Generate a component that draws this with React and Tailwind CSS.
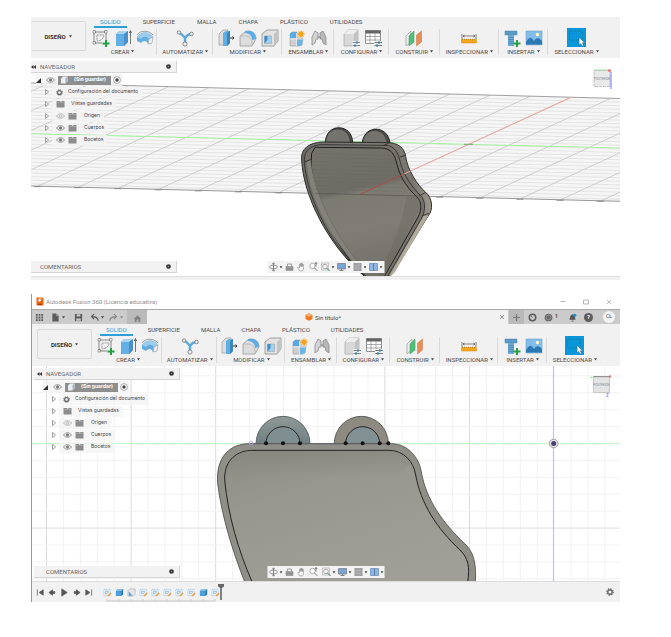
import React from "react";

const range = (n) => Array.from({ length: n }, (_, i) => i);

/* ---------- toolbar icons ---------- */

const Svg = ({ children, size = "size-[18px]", box = "0 0 18 18" }) => (
  <svg viewBox={box} className={`${size} shrink-0`} fill="none" aria-hidden="true">
    {children}
  </svg>
);

const Box = ({ front, top, side, children }) => (
  <Svg>
    <path d="M2 5 6 1h10v11l-4 5H2Z" fill={front} stroke="#9a9a9a" strokeWidth=".6" />
    <path d="M2 5 6 1h10l-4 4Z" fill={top} />
    <path d="M12 5 16 1v11l-4 5Z" fill={side} />
    {children}
  </Svg>
);

const Plus = () => <path d="M10.500 14.500h7M14 11v7" stroke="#25a045" strokeWidth="2" />;

const icons = {
  sketch: (
    <Svg>
      <path d="M2 3h12v8M2 3v11h8" stroke="#7c7c7c" strokeWidth=".9" />
      <path d="M5 6h7c0 3-3 6-7 6Z" stroke="#888" strokeWidth=".8" strokeDasharray="2 .6" />
      <path d="M1 1.500h2.500V4H1ZM12.500 1.500H15V4h-2.500ZM1 12.500h2.500V15H1Z" fill="#fff" stroke="#666" strokeWidth=".6" />
      <Plus />
    </Svg>
  ),
  extrude: (
    <Svg>
      <path d="M2 5 5 2h9v11l-4 4H2Z" fill="#62b0e6" />
      <path d="M2 5 5 2h9l-4 3Z" fill="#a9d3f0" />
      <path d="m10 5 4-3v11l-4 4Z" fill="#4a90c6" />
      <path d="M16.500 15V2M15.300 4l1.200-2.500L17.500 4" stroke="#555" strokeWidth=".8" />
    </Svg>
  ),
  revolve: (
    <Svg>
      <path d="M1 8C4 2 14 2 17 8l-1 6-4 1c-1-3-4-4-6-2l-1 1-4-2Z" fill="#62aee2" />
      <path d="M1 8C4 2 14 2 17 8l-4 2c-2-3-6-3-8 0Z" fill="#9ccbeb" />
      <path d="M1 6C4 1 13 1 17 6" stroke="#888" strokeWidth=".8" />
      <path d="m12 15 4-1 1-6-4 2Z" fill="#eee" stroke="#999" strokeWidth=".5" />
    </Svg>
  ),
  automate: (
    <Svg>
      <path d="M3 4c3 0 4 3 6 5 2-3 3-4 6-4M9 8v7" stroke="#5aa9dc" strokeWidth="2.400" />
      <circle cx="3" cy="3.500" r="1.700" fill="#eee" stroke="#777" strokeWidth=".8" />
      <circle cx="15.500" cy="5" r="1.800" fill="#eee" stroke="#777" strokeWidth=".8" />
      <circle cx="9" cy="15" r="2.100" fill="#eee" stroke="#777" strokeWidth=".8" />
    </Svg>
  ),
  press: (
    <Svg>
      <path d="M2 5 6 1h5v15H2Z" fill="#ddd" stroke="#999" strokeWidth=".7" />
      <path d="m6 4 3-2h4v12l-3 3H6Z" fill="#5eafe4" />
      <path d="m10 4 3-2v12l-3 3Z" fill="#3d84b9" />
      <path d="M13 9h4M15.500 7.500l1.500 1.500-1.500 1.500" stroke="#333" strokeWidth="1" />
    </Svg>
  ),
  fillet: (
    <Svg>
      <path d="M1 16V7l6-5h4c4 1 6 4 6 8l-4 7H1Z" fill="#ddd" stroke="#999" strokeWidth=".8" />
      <path d="m7 2 4 0c4 1 6 4 6 8l-4 1c0-4-2-6-6-7l-2 0Z" fill="#5bade6" />
      <path d="M1 7h5c4 0 7 3 7 6v4" stroke="#b5b5b5" strokeWidth=".8" />
    </Svg>
  ),
  shell: (
    <Svg>
      <path d="M1 5 6 1h11v11l-4 5H1Z" fill="#e2e2e2" stroke="#8d8d8d" strokeWidth=".8" />
      <path d="M13 5 17 1v11l-4 5Z" fill="#c4c4c4" />
      <path d="M3.500 7h7v7.500h-7Z" fill="#9fd0f0" stroke="#999" strokeWidth=".5" />
      <path d="M3.500 7h3v4l-3 3.500Z" fill="#3c8dc9" />
    </Svg>
  ),
  component: (
    <Svg>
      <path d="M2 5 4 3h5v6h6l-1 7-2 1H2Z" fill="#cfcfcf" stroke="#999" strokeWidth=".6" />
      <path d="M2 5 4 3h5v6H2Z" fill="#58aae2" />
      <path d="M8.500 10H15l-1 6-2 1H8.500Z" fill="#6cb5e7" />
      <path d="M8.500 4v13M2 10h13" stroke="#eee" strokeWidth=".8" />
      <path d="m13 1 1 2 2-1-1 2 2.500 1L15 6l1 2-2-.8-1 2.300-1-2.300L10 8l.8-2L8.500 5l2.300-1L10 2l2 1Z" fill="#f9a51a" />
    </Svg>
  ),
  joint: (
    <Svg>
      <path d="M2 16V8l3-6 3 2v6l-2 0-1 4Z" fill="#d4d4d4" stroke="#8a8a8a" strokeWidth=".8" />
      <path d="M16 16V8l-3-6-3 2v6l2 0 1 4Z" fill="#b8b8b8" stroke="#8a8a8a" strokeWidth=".8" />
      <path d="M7.500 8h3" stroke="#999" strokeWidth="1.500" />
    </Svg>
  ),
  configure: (
    <Box front="#d8d8d8" top="#eee" side="#c2c2c2">
      <path d="M10 12h8v6h-8Z" fill="#f1f1f1" />
      <path d="M10.500 13.500H18M10.500 16.500H18" stroke="#666" strokeWidth=".8" />
      <path d="M15 12v3M13 15v3" stroke="#3486c4" strokeWidth="1.200" />
    </Box>
  ),
  tableIcon: (
    <Svg>
      <path d="M1.500 1.500h15v13h-15Z" fill="#fff" stroke="#777" strokeWidth=".8" />
      <path d="M1.500 1.500h15v3h-15Z" fill="#666" />
      <path d="M1.500 7.500h15M1.500 11h15M6 4v10M11 4v10" stroke="#888" strokeWidth=".7" />
      <path d="M10 12h8v6h-8Z" fill="#f1f1f1" />
      <path d="M10.500 13.500H18M10.500 16.500H18" stroke="#555" strokeWidth=".8" />
      <path d="M15 12v3M13 15v3" stroke="#3486c4" strokeWidth="1.200" />
    </Svg>
  ),
  plane: (
    <Svg>
      <path d="m1 7 5-5v11l-5 4Z" fill="#eee" stroke="#999" strokeWidth=".7" />
      <path d="m4 7 5-5v11l-5 4Z" fill="#4fc07a" stroke="#4b9f6a" strokeWidth=".6" />
      <path d="m11.500 6 5-4v11l-5 4Z" fill="#e58e5b" stroke="#c77747" strokeWidth=".5" />
    </Svg>
  ),
  measure: (
    <Svg>
      <path d="M2 5v5M16 5v5M3 7h12M4.500 6 3 7l1.500 1M13.500 6 15 7l-1.500 1" stroke="#666" strokeWidth=".8" />
      <path d="M1.500 10.500h15V14h-15Z" fill="#f5a51d" stroke="#d48c11" strokeWidth=".5" />
      <path d="M2 10.300h14" stroke="#a96f0a" strokeWidth=".8" strokeDasharray="1 1" />
    </Svg>
  ),
  bolt: (
    <Svg>
      <path d="M2 2h12v4H2Z" fill="#5b9bc8" stroke="#4882aa" strokeWidth=".5" />
      <path d="M5 6h6v11H5Z" fill="#6ba8d2" />
      <path d="M5 8.500h6M5 10.500h6M5 12.500h6M5 14.500h6" stroke="#4f88b0" strokeWidth=".8" />
      <Plus />
    </Svg>
  ),
  image: (
    <Svg>
      <path d="M1 2h16v14H1Z" fill="#82bdea" stroke="#6aa6d2" strokeWidth=".6" />
      <path d="M1 13c4-6 5-5 8-1 3-4 5-3 8 0v3.500H1Z" fill="#2c78b3" />
      <circle cx="12.500" cy="5.500" r="1.700" fill="#fff7c9" />
    </Svg>
  ),
  select: (
    <Svg size="size-[19px]">
      <path d="M0 0h18v18H0Z" fill="#0a96da" />
      <path d="M2.500 3h12v8.500h-12Z" stroke="#1a7b8e" strokeWidth=".8" strokeDasharray="1.500 1" />
      <path d="m11.500 9 0 7 1.600-1.400 1.200 2.400 1.300-.6-1.100-2.400h2Z" fill="#fff" stroke="#555" strokeWidth=".4" />
    </Svg>
  ),
};

const groups = [
  { label: "CREAR", items: ["sketch", "extrude", "revolve"], grow: "flex-[69_1_0%]" },
  { label: "AUTOMATIZAR", items: ["automate"], grow: "flex-[56_1_0%]" },
  { label: "MODIFICAR", items: ["press", "fillet", "shell"], grow: "flex-[69_1_0%]" },
  { label: "ENSAMBLAR", items: ["component", "joint"], grow: "flex-[52_1_0%]" },
  { label: "CONFIGURAR", items: ["configure", "tableIcon"], grow: "flex-[54_1_0%]" },
  { label: "CONSTRUIR", items: ["plane"], grow: "flex-[51_1_0%]" },
  { label: "INSPECCIONAR", items: ["measure"], grow: "flex-[59_1_0%]" },
  { label: "INSERTAR", items: ["bolt", "image"], grow: "flex-[49_1_0%]" },
  { label: "SELECCIONAR", items: ["select"], grow: "flex-[57_1_0%]" },
];

const tabs = ["SOLIDO", "SUPERFICIE", "MALLA", "CHAPA", "PLÁSTICO", "UTILIDADES"];

const Caret = () => (
  <svg viewBox="0 0 3 3" className="size-[3px] shrink-0" aria-hidden="true">
    <path d="M0 .3h3L1.500 2.500Z" fill="#444" />
  </svg>
);

function Toolbar({ inset }) {
  return (
    <div className={`flex bg-[#f1f1f1] ${inset ? "h-[42px] pr-[17px] pl-[5px] pt-px" : "h-[41px] pr-[15px]"}`}>
      <button
        className={`mt-1 flex h-[30px] w-[55px] shrink-0 items-center justify-center gap-[3px] rounded-[2px] border border-[#d9d9d9] text-[6px] font-bold text-[#333] ${inset ? "" : "border-l-0"}`}
      >
        DISEÑO <Caret />
      </button>
      <div className="ml-[2px] flex min-w-0 flex-1 flex-col">
        <nav className={`flex h-[11px] pl-[6px] ${inset ? "gap-[9px]" : "gap-[10px]"}`}>
          {tabs.map((t, i) => (
            <button
              key={t}
              className={`h-[11px] border-b-2 px-[6px] text-[6px] leading-[9px] ${i === 0 ? "border-[#2ea0d8] text-[#2ea0d8]" : "border-transparent text-[#4a4a4a]"}`}
            >
              {t}
            </button>
          ))}
        </nav>
        <div className="flex">
          {groups.map((g, i) => (
            <div
              key={g.label}
              className={`flex min-w-0 flex-col items-center ${g.grow} ${i < groups.length - 1 ? "bg-[linear-gradient(#dadada,#dadada)] bg-[length:1px_26px] bg-[position:right_1px] bg-no-repeat" : ""}`}
            >
              <div className="flex h-[19px] items-center gap-1">
                {g.items.map((n) => (
                  <button key={n} aria-label={n} className="shrink-0">
                    {icons[n]}
                  </button>
                ))}
              </div>
              <button className="flex items-center gap-[2px] text-[6px] leading-[9px] whitespace-nowrap text-[#4a4a4a]">
                {g.label} <Caret />
              </button>
            </div>
          ))}
        </div>
      </div>
    </div>
  );
}

/* ---------- browser tree ---------- */

const Eye = ({ off }) => (
  <svg viewBox="0 0 9 6" className="h-[6px] w-[9px] shrink-0" fill="none" stroke={off ? "#aaa" : "#808080"} aria-hidden="true">
    <path d="M.5 3C2.500 0 6.500 0 8.500 3 6.500 6 2.500 6 .5 3Z" strokeWidth=".8" />
    <circle cx="4.500" cy="3" r="1.300" fill={off ? "none" : "#777"} strokeWidth=".8" />
  </svg>
);

const Folder = () => (
  <svg viewBox="0 0 9 8" className="h-2 w-[9px] shrink-0" aria-hidden="true">
    <path d="M.5 1h3.500l.8 1 1-1h2.700v6.500h-8Z" fill="#8c8c8c" />
    <path d="M.5 2.500h8" stroke="#bbb" strokeWidth=".5" />
  </svg>
);

const Gear = ({ size = "size-[7px]" }) => (
  <svg viewBox="0 0 8 8" className={`${size} shrink-0`} fill="none" stroke="#666" aria-hidden="true">
    <circle cx="4" cy="4" r="2.200" strokeWidth="1.400" />
    <circle cx="4" cy="4" r="3.300" strokeWidth="1.100" strokeDasharray="1.300 1.290" />
  </svg>
);

const Expand = () => (
  <svg viewBox="0 0 4 6" className="h-[6px] w-1 shrink-0" fill="#fff" stroke="#888" strokeWidth=".8" aria-hidden="true">
    <path d="M.5.5 3.500 3 .5 5.500Z" />
  </svg>
);

const Dot = () => (
  <svg viewBox="0 0 6 6" className="size-[5px] shrink-0" aria-hidden="true">
    <circle cx="3" cy="3" r="2.800" fill="#333" />
    <circle cx="3" cy="3" r=".8" fill="#999" />
  </svg>
);

const rows = [
  { text: "Configuración del documento", kind: "gear" },
  { text: "Vistas guardadas", kind: "folder" },
  { text: "Origen", kind: "hidden" },
  { text: "Cuerpos", kind: "visible" },
  { text: "Bocetos", kind: "visible" },
];

function PanelBar({ text, inset, arrows }) {
  return (
    <div
      className={`flex h-3 w-[146px] items-center border-r border-b border-[#d4d4d4] bg-[#f2f2f2] pr-[5px] text-[6px] leading-3 text-[#666] ${inset ? "pl-[3px]" : ""}`}
    >
      <span className="flex w-[9px] shrink-0 items-center">
        {arrows && (
          <svg viewBox="0 0 5 4" className="h-1 w-[5px]" fill="#333" aria-hidden="true">
            <path d="M2.500 0v4L0 2ZM5 0v4L2.500 2Z" />
          </svg>
        )}
      </span>
      <span className="flex-1">{text}</span>
      <Dot />
    </div>
  );
}

function Browser({ inset }) {
  return (
    <div className={`absolute ${inset ? "top-[2px] left-[2px]" : "top-[3px] left-0"}`}>
      <PanelBar text="NAVEGADOR" inset={inset} arrows />
      <ul className={`mt-px font-[Inter,sans-serif] text-[5px] text-[#444] ${inset ? "pl-[9px]" : "pl-[5px]"}`}>
        <li className="flex h-3 w-fit items-center bg-[#f2f2f2]/80 pr-px">
          <svg viewBox="0 0 5 5" className="size-[5px]" aria-hidden="true">
            <path d="M5 0v5H0Z" fill="#333" />
          </svg>
          <span className="ml-[5px] flex">
            <Eye />
          </span>
          <span className="ml-[3px] flex h-[9px] items-center gap-[6px] bg-[#8e8e8e] pr-[5px] pl-[2px] font-bold text-white">
            <svg viewBox="0 0 8 8" className="size-2" aria-hidden="true">
              <path d="m1 2.500 2-2h4.500v5l-2 2H1Z" fill="#e9eef3" />
              <path d="M5.500 2.500 7.500.5v5l-2 2Z" fill="#a7b4c2" />
            </svg>
            (Sin guardar)
          </span>
          <svg viewBox="0 0 8 8" className="ml-[2px] size-2" fill="none" aria-hidden="true">
            <circle cx="4" cy="4" r="3.400" fill="#fff" stroke="#888" strokeWidth=".7" />
            <circle cx="4" cy="4" r="1.700" fill="#444" />
          </svg>
        </li>
        {rows.map((r) => (
          <li key={r.text} className="flex h-3 items-center pl-[9px]">
            <Expand />
            <span className="ml-[3px] flex h-[11px] items-center bg-[#f4f4f4]/80 px-1 whitespace-nowrap">
              {r.kind === "gear" && (
                <>
                  <Gear />
                  <span className="pl-[5px]">{r.text}</span>
                </>
              )}
              {r.kind === "folder" && (
                <>
                  <Folder />
                  <span className="pl-[6px]">{r.text}</span>
                </>
              )}
              {(r.kind === "hidden" || r.kind === "visible") && (
                <>
                  <Eye off={r.kind === "hidden"} />
                  <span className="w-[3px]" />
                  <Folder />
                  <span className="pl-[7px]">{r.text}</span>
                </>
              )}
            </span>
          </li>
        ))}
      </ul>
    </div>
  );
}

/* ---------- navigation bar ---------- */

const NavIcon = ({ children }) => (
  <Svg size="size-[10px]" box="0 0 10 10">
    {children}
  </Svg>
);

const navItems = [
  { name: "Órbita", caret: true, d: <><ellipse cx="5" cy="5" rx="4" ry="1.800" stroke="#888" strokeWidth=".8" /><path d="M5 1v8M3.700 2.300 5 .8l1.300 1.500M3.700 7.700 5 9.200l1.300-1.500" stroke="#777" strokeWidth=".9" /></> },
  { name: "Mirar a", d: <><path d="M1.500 4.500h7v4h-7Z" fill="#999" stroke="#888" strokeWidth=".6" /><path d="M3 4V2h4v2M1.500 6.500h7" stroke="#888" strokeWidth=".8" /></> },
  { name: "Encuadre", d: <path d="M3.200 8.800 1.200 5.500l.8-.5 1 1V2.200h1v2.300V1.300h1v3.200V1.500h1v3V2.500h1V7l-.9 1.800Z" fill="#fff" stroke="#888" strokeWidth=".6" /> },
  { name: "Zoom", d: <><circle cx="4" cy="4" r="2.700" fill="#fff" stroke="#999" strokeWidth=".8" /><path d="m6 6 3 3M7.500 4.500v-4M6.300 2 7.500.5 8.700 2" stroke="#666" strokeWidth=".8" /></> },
  { name: "Ventana", caret: true, d: <><path d="M1 1h7v7H1Z" stroke="#aaa" strokeWidth=".6" /><circle cx="4.500" cy="4.500" r="2.300" fill="#fff" stroke="#888" strokeWidth=".7" /><path d="m6 6 3 3" stroke="#3f7f5a" strokeWidth="1" /></> },
  { name: "Visualización", caret: true, d: <><path d="M1 1.500h8v5.500H1Z" fill="#79a5d3" stroke="#778" strokeWidth=".7" /><path d="M3 8.500h4M5 7v1.500" stroke="#777" strokeWidth=".9" /></> },
  { name: "Rejilla", caret: true, d: <><path d="M1 1h8v8H1Z" fill="#9b9b9f" /><path d="M1 3.700h8M1 6.300h8M3.700 1v8M6.300 1v8" stroke="#c4c4c8" strokeWidth=".5" /></> },
  { name: "Vistas", caret: true, d: <><path d="M1 1.500h8v7H1Z" fill="#8fb4e0" stroke="#6589b8" strokeWidth=".7" /><path d="M5 1.500v7" stroke="#4a6c99" strokeWidth=".8" /></> },
];

function NavBar() {
  return (
    <div className="absolute bottom-[3px] left-1/2 flex h-3 w-[117px] -translate-x-1/2 items-center justify-between bg-[#f3f3f3] px-px">
      {navItems.map((n) => (
        <button key={n.name} aria-label={n.name} className="flex items-center gap-px">
          <NavIcon>{n.d}</NavIcon>
          {n.caret && <Caret />}
        </button>
      ))}
    </div>
  );
}

function Viewport({ inset, children }) {
  return (
    <div className={`relative overflow-hidden bg-white ${inset ? "aspect-[588/215]" : "aspect-[589/218]"}`}>
      {children}
      <Browser inset={inset} />
      <div className={`absolute bottom-[3px] ${inset ? "left-[2px]" : "left-0"}`}>
        <PanelBar text="COMENTARIOS" inset={inset} />
      </div>
      <NavBar />
    </div>
  );
}

/* ---------- 3D scenes ---------- */

function PerspectiveScene() {
  return (
    <svg viewBox="31 58 589 218" className="block size-full" fill="none">
      <defs>
        <clipPath id="floor">
          <path d="M31 83 620 98.500V201.300L31 186Z" />
        </clipPath>
        <linearGradient id="cavity" x1="0" y1="0" x2=".2" y2="1">
          <stop offset="0" stopColor="#74736b" />
          <stop offset=".38" stopColor="#6d6c65" />
          <stop offset=".42" stopColor="#7c7b72" />
          <stop offset=".7" stopColor="#7f7d75" />
          <stop offset="1" stopColor="#74736b" />
        </linearGradient>
        <linearGradient id="wall" x1="0" y1="0" x2="1" y2="0">
          <stop offset="0" stopColor="#6c6b65" />
          <stop offset=".5" stopColor="#7f7d75" />
          <stop offset=".85" stopColor="#77756d" />
          <stop offset="1" stopColor="#9a968a" />
        </linearGradient>
      </defs>
      <g clipPath="url(#floor)">
        <path d="M31 83 620 98.500V201.300L31 186Z" fill="#f6f6f6" />
        {range(30).map((i) => (
          <path key={i} d={`M31 ${83 + i * 3.6}L620 ${98.5 + i * 3.6}`} stroke="#dedede" strokeWidth=".8" />
        ))}
        {range(22).map((i) => (
          <path key={i} d={`M${-203 + i * 40.2} ${179.8 + i * 1.05}L${8 + i * 40.2} ${82.4 + i * 1.05}`} stroke="#c4c4c4" strokeWidth=".8" />
        ))}
      </g>
      <path d="M31 83 620 98.500" stroke="#999" strokeWidth=".9" />
      <path d="M31 186 620 201.300" stroke="#8a8a8a" strokeWidth=".9" />
      {range(15).map((i) => (
        <path key={i} d={`M${34 + i * 40.2} ${186.6 + i * 1.05}h7`} stroke="#888" strokeWidth="1" />
      ))}
      <path d="M31 133.700 620 148" stroke="#a4f3a0" strokeWidth="1" />

      <g transform="translate(290 85) scale(.33333)" strokeLinejoin="round">
        <path d="M106 174C106 113 188 113 188 174Z" fill="#4f4f4a" stroke="#222" strokeWidth="3" />
        <path d="M107 174C107 118 180 118 181 174Z" fill="#74736d" stroke="#333" strokeWidth="2" />
        <path d="M217 178C217 117 300 117 300 180Z" fill="#4f4f4a" stroke="#222" strokeWidth="3" />
        <path d="M218 178C218 122 291 122 292 180Z" fill="#74736d" stroke="#333" strokeWidth="2" />
        <path
          d="M95 171 290 173C325 172 344 190 347 215 353 255 382 300 407 322 428 340 430 375 415 392L310 562 300 573H222C110 475 40 330 35 225 31 190 60 173 95 171Z"
          fill="url(#wall)" stroke="#2b2b29" strokeWidth="3"
        />
        <path d="m415 392-15 0L298 573h5l12-12Z" fill="#b0ab9c" />
        <path
          d="M95 179 285 181C315 181 325 205 331 232 342 275 368 308 391 331 408 347 406 378 396 398L292 575H225C115 475 48 330 43 225 42 195 65 181 95 179Z"
          fill="#75736b" stroke="#2b2b29" strokeWidth="2.500"
        />
        <path
          d="M75 187 275 189C305 190 314 210 321 238 332 285 360 316 380 335 395 350 396 370 386 393L283 575H230C150 520 50 320 65 205Z"
          fill="url(#cavity)" stroke="#1f1f1e" strokeWidth="3"
        />
        <path d="M49 230C55 330 112 450 208 550L218 550C130 445 70 320 62 222Z" fill="#83827b" stroke="#555" strokeWidth="1" />
        <path d="M350 335 388 338 392 370 283 573H262C310 490 335 410 350 335Z" fill="#63625b" opacity=".3" />
        <path d="m330 216 17-5M388 332l20-10M398 392l18-7M45 230l20-7M280 182l15-7" stroke="#2b2b29" strokeWidth="2.500" />
        <path d="M75 325 378 333" stroke="#55544e" strokeWidth="2" />
        {range(10).map((i) => (
          <path key={i} d={`M70 ${205 + i * 12} ${312 + i * 4} ${212 + i * 12}`} stroke="#5e5d57" strokeWidth="1" opacity=".5" />
        ))}
      </g>
      <path d="M404 174 571 97.500" stroke="#f6a09a" strokeWidth=".9" />
      <path d="M360 194.300 404 174" stroke="#b8453c" strokeWidth=".9" />
      <path d="M464 144.300h9" stroke="#769e6e" strokeWidth=".9" />

      <path d="M594 70.500h16v16h-16Z" fill="#e9e9e9" stroke="#aaa" strokeWidth=".7" strokeDasharray="3 1" />
      <text x="602" y="79.500" textAnchor="middle" fontSize="3" fill="#888">POSTERIOR</text>
      <path d="M594 70h14" stroke="#88dd88" strokeWidth=".8" />
      <path d="M608 70.500h3" stroke="#e66" strokeWidth="2" />
      <path d="M611 72v17" stroke="#8b87f0" strokeWidth="1.200" />
    </svg>
  );
}

function FrontScene() {
  return (
    <svg viewBox="32 366 588 215" className="block size-full" fill="none">
      <defs>
        <linearGradient id="plate" x1="0" y1="0" x2=".6" y2="1">
          <stop offset="0" stopColor="#8c8b84" />
          <stop offset=".35" stopColor="#98978f" />
          <stop offset="1" stopColor="#9f9e97" />
        </linearGradient>
        <linearGradient id="blueEar" x1="0" y1="0" x2="0" y2="1">
          <stop offset="0" stopColor="#8f9997" />
          <stop offset="1" stopColor="#708083" />
        </linearGradient>
        <linearGradient id="topShade" x1="0" y1="0" x2="0" y2="1">
          <stop offset="0" stopColor="#85847c" />
          <stop offset="1" stopColor="#85847c" stopOpacity="0" />
        </linearGradient>
      </defs>
      {range(35)
        .filter((i) => i !== 30)
        .map((i) => (
          <path key={i} d={`M${46.5 + i * 16.92} 366V581`} stroke={i % 5 === 0 ? "#dadada" : "#f2f2f2"} strokeWidth="1" />
        ))}
      {range(13).map((i) => (
        <path key={i} d={`M32 ${375.8 + i * 16.92}H620`} stroke={i === 9 ? "#dedede" : "#f2f2f2"} strokeWidth="1" />
      ))}
      <path d="M32 443.500H620" stroke="#c8f5c6" strokeWidth="1.200" />
      <path d="M553.500 366V581" stroke="#c0bff8" strokeWidth="1.200" />
      <g transform="translate(210 400) scale(.33333)">
        <path d="M138 131a81 82 0 0 1 162 0Z" fill="url(#blueEar)" stroke="#4b5253" strokeWidth="2.500" />
        <path d="M168 131a51 51 0 0 1 102 0Z" fill="#7f8e90" stroke="#262626" strokeWidth="3" />
        <path d="M373 131a81 82 0 0 1 162 0Z" fill="#8c8a81" stroke="#4b4b48" strokeWidth="2.500" />
        <path d="M407 131a51 51 0 0 1 102 0Z" fill="#819092" stroke="#262626" strokeWidth="3" />
        <path
          d="M112 131H545C592 132 626 170 634 215 648 300 700 370 765 432 790 455 800 490 796 545H104C70 460 35 350 23 250 18 180 50 135 112 131Z"
          fill="#8f8f88" stroke="#4b4b48" strokeWidth="2.500"
        />
        <path
          d="M122 151H540C582 153 611 185 617 225 632 310 680 385 750 450 775 475 780 500 773 545H126C85 450 55 350 44 240 42 190 70 155 122 151Z"
          fill="url(#plate)" stroke="#222" strokeWidth="3"
        />
        <path d="M122 153H540C570 155 590 170 602 190L560 235H48C44 190 75 155 122 153Z" fill="url(#topShade)" opacity=".6" />
        <path d="M120 131H535" stroke="#66666f" strokeWidth="2.500" />
        {[168, 219, 270, 407, 458, 509, 535].map((x) => (
          <circle key={x} cx={x} cy="130" r="6" fill="#111" />
        ))}
        <circle cx="123" cy="129" r="5.500" stroke="#b99be6" strokeWidth="2.500" />
      </g>
      <circle cx="553.700" cy="443.500" r="4.300" fill="#e4e4ea" stroke="#999" strokeWidth=".9" />
      <circle cx="553.700" cy="443.500" r="2.500" fill="#4c3f75" />

      <path d="M593.500 376.500h16v16h-16Z" fill="#e4e4e4" stroke="#bbb" strokeWidth=".8" />
      <path d="M593.500 376.700h16" stroke="#888" strokeWidth="1" />
      <text x="601.500" y="386" textAnchor="middle" fontSize="3" fill="#888">POSTERIOR</text>
      <path d="m590.500 377 2 1" stroke="#7fe07f" strokeWidth="1.200" />
      <path d="M609 376.500h2" stroke="#e66" strokeWidth="2" />
      <path d="M606.500 393.500h2l-2 3h2" stroke="#8b87f0" strokeWidth=".8" />
    </svg>
  );
}

/* ---------- window chrome ---------- */

const Small = ({ children, w = "size-[9px]" }) => (
  <Svg size={w} box="0 0 10 10">
    {children}
  </Svg>
);

function TitleBar() {
  return (
    <header className="flex h-[15px] items-center pr-2 pl-1 text-[6px] text-[#8f8f8f]">
      <Svg size="h-[9px] w-2" box="0 0 8 9">
        <path d="M.5.5h6l1 1v7H.5Z" fill="#f0640f" />
        <path d="M3 2h2.500M3 2v3M3 3.500h2" stroke="#fff" strokeWidth="1" />
        <path d="M2 7.300h4" stroke="#7a2f05" strokeWidth=".8" />
      </Svg>
      <h1 className="flex-1 pl-[2px]">Autodesk Fusion 360 (Licencia educativa)</h1>
      <div className="flex items-center gap-[17px]">
        <button aria-label="Minimizar"><Svg size="size-[6px]" box="0 0 6 6"><path d="M.5 2.500h5" stroke="#999" strokeWidth=".7" /></Svg></button>
        <button aria-label="Maximizar"><Svg size="size-[6px]" box="0 0 6 6"><path d="M.5 1h5v4h-5Z" stroke="#999" strokeWidth=".7" /></Svg></button>
        <button aria-label="Cerrar"><Svg size="size-[6px]" box="0 0 6 6"><path d="m1 1 4 4M5 1 1 5" stroke="#999" strokeWidth=".7" /></Svg></button>
      </div>
    </header>
  );
}

function TabStrip() {
  return (
    <div className="flex h-[15px] items-stretch border-t border-[#aaa] bg-[#cbcbcb] text-[6px] text-[#444]">
      <div className="flex w-[95px] shrink-0 items-center pl-[3px]">
        <button aria-label="Datos"><Small><path d="M1 1h2v2H1ZM4 1h2v2H4ZM7 1h2v2H7ZM1 4h2v2H1ZM4 4h2v2H4ZM7 4h2v2H7ZM1 7h2v2H1ZM4 7h2v2H4ZM7 7h2v2H7Z" fill="#5c5c5c" /></Small></button>
        <button aria-label="Archivo" className="ml-[7px] flex items-center gap-[2px]"><Small><path d="M1.500.5h4.500L8.500 3v6.500h-7Z" fill="#5c5c5c" /><path d="M6 .5V3h2.500" stroke="#ccc" strokeWidth=".6" /></Small><Caret /></button>
        <button aria-label="Guardar" className="ml-[9px]"><Small><path d="M1 1h8v8H1Z" fill="#5c5c5c" /><path d="M3 1.500h4v2.500H3ZM2.500 6h5v2.500h-5Z" fill="#ccc" /></Small></button>
        <button aria-label="Deshacer" className="ml-[7px] flex items-center gap-[2px]"><Small><path d="M9 8.500C9 5 6.500 4 2 4M4.500 1.200 1.700 4l2.800 2.800" stroke="#555" strokeWidth="1.200" /></Small><Caret /></button>
        <button aria-label="Rehacer" className="ml-[5px] flex items-center gap-[2px] opacity-50"><Small><path d="M1 8.500C1 5 3.500 4 8 4M5.500 1.200 8.300 4 5.500 6.800" stroke="#444" strokeWidth="1.200" /></Small><Caret /></button>
      </div>
      <button aria-label="Inicio" className="flex w-5 shrink-0 items-center justify-center bg-[#bababa] pt-[2px]"><Small><path d="M1 5.500 5 1.500l4 4H8V9H6V6H4v3H2V5.500Z" fill="#808080" /></Small></button>
      <div className="flex flex-1 items-center bg-[#f1f1f1] pr-[3px]">
        <span className="flex flex-1 items-center justify-center gap-[2px]">
          <Svg size="size-2" box="0 0 8 8">
            <path d="m4 .3 3.500 1.700v4L4 7.700.5 6V2Z" fill="#f47b20" />
            <path d="m4 .3 3.500 1.700L4 3.700.5 2Z" fill="#fbb36b" />
          </Svg>
          Sin título*
        </span>
        <button aria-label="Cerrar pestaña"><Svg size="size-[6px]" box="0 0 6 6"><path d="m1 1 4 4M5 1 1 5" stroke="#777" strokeWidth=".8" /></Svg></button>
      </div>
      <button aria-label="Nueva pestaña" className="ml-px flex w-[15px] shrink-0 items-center justify-center bg-[#b9b9b9]"><Svg size="size-[7px]" box="0 0 7 7"><path d="M3.500 0v7M0 3.500h7" stroke="#777" strokeWidth="1.200" /></Svg></button>
      <div className="flex w-24 shrink-0 items-center pr-[5px] pl-1">
        <button aria-label="Extensiones"><Small><circle cx="5" cy="5" r="3.600" stroke="#5c5c5c" strokeWidth="1.700" /><path d="M5 5 3 2.500" stroke="#5c5c5c" strokeWidth="1" /></Small></button>
        <button aria-label="Trabajos" className="ml-[7px] flex items-center gap-[2px]"><Small><circle cx="5" cy="5" r="4.300" fill="#6a6a6a" /><circle cx="5" cy="5" r="2.600" stroke="#bbb" strokeWidth=".5" /></Small><span className="text-[5px] font-bold">1</span></button>
        <button aria-label="Notificaciones" className="ml-[10px]"><Small><path d="M2 7c1-1 .5-5 3-5s2 4 3 5Z" fill="#555" stroke="#555" /><path d="M4 9h2" stroke="#555" strokeWidth="1" /><circle cx="7.500" cy="2.500" r="1.800" fill="#1790d8" /></Small></button>
        <button aria-label="Ayuda" className="ml-[7px] flex size-[9px] items-center justify-center rounded-full bg-[#5c5c5c] text-[6px] leading-none font-bold text-white">?</button>
        <button className="ml-auto flex size-3 items-center justify-center rounded-full bg-[#f4f4f4] text-[5px]">CL</button>
      </div>
    </div>
  );
}

/* ---------- timeline ---------- */

const SketchStep = () => (
  <Small>
    <path d="M1 1.500h7v7H1Z" fill="#eaf3fa" stroke="#8ebde0" strokeWidth=".7" strokeDasharray="1.400 .6" />
    <path d="M3 3.500h3c0 2-1 3-3 3Z" stroke="#7f9ab0" strokeWidth=".7" />
    <path d="M5.500 9 9 5.500" stroke="#f0a04a" strokeWidth="1.600" />
  </Small>
);
const SolidStep = () => (
  <Small>
    <path d="m1 3 2-2h6v6L7 9H1Z" fill="#4d9fdc" />
    <path d="m7 3 2-2v6L7 9Z" fill="#2f74a8" />
    <path d="m1 3 2-2h6L7 3Z" fill="#8ec3ea" />
  </Small>
);
const ShellStep = () => (
  <Small>
    <path d="m1 3 2-2h6v6L7 9H1Z" fill="#e5e5e5" stroke="#999" strokeWidth=".5" />
    <path d="M2 3.500v5h4Z" fill="#4d9fdc" />
  </Small>
);
const steps = [SketchStep, SolidStep, ShellStep, SketchStep, SketchStep, SketchStep, SketchStep, SketchStep, SolidStep, SketchStep];

const playback = [
  ["Inicio", "M1.500 1.500v7M8 2v6L3.500 5Z"],
  ["Anterior", "M1 5 5 2v6ZM5 4h2.500v2H5Z"],
  ["Reproducir", "M2 1v8l6-4Z"],
  ["Siguiente", "M9 5 5 2v6ZM5 4H2.500v2H5Z"],
  ["Fin", "M8.500 1.500v7M2 2v6L6.500 5Z"],
];

function Timeline() {
  return (
    <footer className="flex h-[21px] items-center border-t border-[#dcdcdc] bg-[#f1f1f1] pr-[6px] pl-1">
      <div className="flex gap-[3px]">
        {playback.map(([name, d]) => (
          <button key={name} aria-label={name}>
            <Small><path d={d} fill="#555" stroke="#555" strokeWidth=".8" /></Small>
          </button>
        ))}
      </div>
      <div className="ml-2 flex self-end">
        {steps.map((Step, i) => (
          <button key={i} aria-label={`Paso ${i + 1}`} className="flex h-[14px] w-3 flex-col items-center">
            <Step />
            <svg viewBox="0 0 12 4" className="mt-px h-1 w-3" aria-hidden="true">
              <path
                d={i === 0 ? "M6 1v2h6" : i === steps.length - 1 ? "M0 3h6V1" : "M0 3h12M6 1v2"}
                fill="none" stroke="#bdbdbd" strokeWidth=".8"
              />
            </svg>
          </button>
        ))}
      </div>
      <svg viewBox="0 0 6 16" className="-ml-[3px] h-4 w-[6px]" aria-hidden="true">
        <path d="M0 0h6v2.500L3.800 4v12H2.200V4L0 2.500Z" fill="#666" />
      </svg>
      <button aria-label="Ajustes" className="ml-auto">
        <Gear size="size-2" />
      </button>
    </footer>
  );
}

export default function App() {
  return (
    <main className="flex min-h-screen flex-col gap-[14px] bg-white pt-[17px] pr-[51px] pb-[35px] pl-[31px] font-[Roboto,'Liberation_Sans',sans-serif]">
      <section>
        <Toolbar />
        <Viewport>
          <PerspectiveScene />
        </Viewport>
        <div className="h-1 border-t border-[#dedede] bg-[#f1f1f1]" />
      </section>
      <section className="border-l border-[#999]">
        <TitleBar />
        <TabStrip />
        <Toolbar inset />
        <Viewport inset>
          <FrontScene />
        </Viewport>
        <Timeline />
      </section>
    </main>
  );
}
